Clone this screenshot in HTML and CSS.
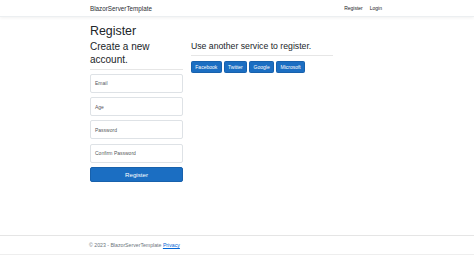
FILE: index.html
```html
<!DOCTYPE html>
<html lang="en">
  <head>
    <meta charset="UTF-8" />
    <meta name="viewport" content="width=device-width, initial-scale=1.0" />
    <title>Register - BlazorServerTemplate</title>
    <link rel="stylesheet" href="styles.css">
  </head>
  <body>
    <header class="navbar">
      <div class="container nav-inner">
        <a class="brand" href="#">BlazorServerTemplate</a>
        <ul class="nav-links">
          <li><a href="#">Register</a></li>
          <li><a href="#">Login</a></li>
        </ul>
      </div>
    </header>

    <main class="container">
      <h1>Register</h1>
      <div class="row">
        <div class="col-left">
          <form>
            <h2>Create a new account.</h2>
            <hr />
            <div class="field"><input type="email" placeholder=" " /><label>Email</label></div>
            <div class="field"><input type="number" placeholder=" " /><label>Age</label></div>
            <div class="field"><input type="password" placeholder=" " /><label>Password</label></div>
            <div class="field"><input type="password" placeholder=" " /><label>Confirm Password</label></div>
            <button type="submit" class="btn btn-lg">Register</button>
          </form>
        </div>
        <div class="col-right">
          <h3>Use another service to register.</h3>
          <hr />
          <div class="providers">
            <button class="btn">Facebook</button>
            <button class="btn">Twitter</button>
            <button class="btn">Google</button>
            <button class="btn">Microsoft</button>
          </div>
        </div>
      </div>
    </main>

    <footer class="footer">
      <div class="container">
        &copy; 2023 - BlazorServerTemplate <a href="#">Privacy</a>
      </div>
    </footer>
  </body>
</html>
```

FILE: styles.css
```css
* {
  box-sizing: border-box;
}

body {
  margin: 0;
  min-height: 100vh;
  display: flex;
  flex-direction: column;
  font-family: "Liberation Sans", Arial, sans-serif;
  font-size: 5px;
  color: #212529;
  background: #fff;
}

.container {
  width: 294px;
  margin: 0 auto;
}

/* Navigation */
.navbar {
  height: 17px;
  border-bottom: 1px solid #eceff1;
  box-shadow: 0 1px 3px rgba(0, 0, 0, 0.06);
}

.nav-inner {
  height: 100%;
  display: flex;
  align-items: center;
  justify-content: space-between;
}

.brand {
  font-size: 6.3px;
  color: #2b2f33;
  text-decoration: none;
}

.nav-links {
  list-style: none;
  display: flex;
  gap: 7px;
  margin: 0;
  padding: 0 2px 0 0;
}

.nav-links a {
  color: #212529;
  text-decoration: none;
}

/* Content */
h1 {
  font-size: 12.4px;
  font-weight: 500;
  margin: 7px 0 2px;
  line-height: 1.2;
}

h2 {
  font-size: 10px;
  font-weight: 500;
  line-height: 1.3;
  margin: -1px 0 3px;
}

h3 {
  font-size: 8.7px;
  font-weight: 500;
  line-height: 1.2;
  margin: 0 0 4px;
}

hr {
  border: none;
  border-top: 1px solid #e6e6e6;
  margin: 0 0 4px;
}

.row {
  display: flex;
  gap: 8px;
}

.col-left {
  width: 93px;
}

.col-right {
  width: 142px;
}

.field {
  position: relative;
  margin-bottom: 4.3px;
}

.field input {
  display: block;
  width: 100%;
  height: 19px;
  border: 1px solid #dee2e6;
  border-radius: 2px;
  background: #fff;
  font: inherit;
}

.field label {
  position: absolute;
  left: 5px;
  top: 0;
  height: 19px;
  display: flex;
  align-items: center;
  color: rgba(33, 37, 41, 0.8);
  pointer-events: none;
}

.btn {
  font-family: inherit;
  font-size: 5px;
  color: #fff;
  background: #1b6ec2;
  border: 1px solid #1861ac;
  border-radius: 1.5px;
  padding: 0 3.3px;
  height: 12px;
  cursor: pointer;
}

.btn-lg {
  width: 100%;
  height: 15px;
  font-size: 6.2px;
  border-radius: 2px;
}

.providers {
  display: flex;
  gap: 2.2px;
  margin-top: 5px;
}

/* Footer */
.footer {
  margin-top: auto;
  margin-bottom: 5px;
  height: 20px;
  border-top: 1px solid #e5e5e5;
  border-bottom: 1px solid #eeeeee;
  display: flex;
  align-items: center;
  color: #6c757d;
  font-size: 5.2px;
}

.footer .container {
  padding-left: 0;
  margin-left: 89px;
}

.footer a {
  color: #0366d6;
}
```
